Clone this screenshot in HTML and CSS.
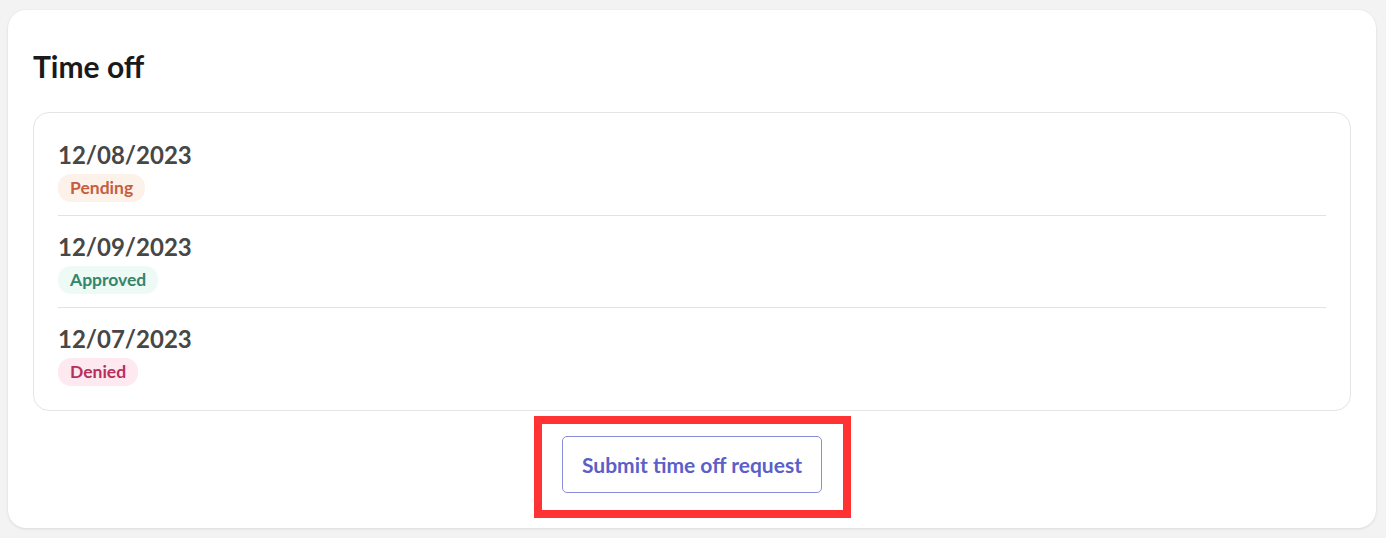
FILE: index.html
```html
<!DOCTYPE html>
<html lang="en">
<head>
<meta charset="utf-8">
<title>Time off</title>
<link rel="stylesheet" href="styles.css">
</head>
<body>
<div class="page">
  <section class="card">
    <h2 class="title">Time off</h2>
    <ul class="list">
      <li class="row">
        <span class="date">12/08/2023</span>
        <span class="badge badge-pending">Pending</span>
      </li>
      <li class="row">
        <span class="date">12/09/2023</span>
        <span class="badge badge-approved">Approved</span>
      </li>
      <li class="row">
        <span class="date">12/07/2023</span>
        <span class="badge badge-denied">Denied</span>
      </li>
    </ul>
    <div class="actions">
      <div class="highlight-wrap">
        <button class="btn" type="button">Submit time off request</button>
        <span class="highlight" aria-hidden="true"></span>
      </div>
    </div>
  </section>
</div>
</body>
</html>
```

FILE: styles.css
```css
* { box-sizing: border-box; }
html, body {
  margin: 0;
  padding: 0;
  background: #f3f3f3;
  font-family: Lato, "Open Sans", "Liberation Sans", sans-serif;
}
.page {
  padding: 10px 10px 10px 8px;
  height: 538px;
}
.card {
  background: #ffffff;
  border-radius: 18px;
  box-shadow: 0 1px 3px rgba(0,0,0,0.10), 0 0 1px rgba(0,0,0,0.06);
  padding: 39px 25px 36px 25px;
  height: 518px;
}
.title {
  margin: 0;
  font-size: 30px;
  line-height: 34px;
  font-weight: 700;
  color: #1a1a1a;
}
.list {
  list-style: none;
  margin: 29px 0 0 0;
  padding: 0 24px;
  border: 1px solid #e4e4e4;
  border-radius: 16px;
  height: 299px;
}
.row {
  display: flex;
  flex-direction: column;
  align-items: flex-start;
  gap: 6px;
  height: 92px;
  padding-top: 18px;
  border-bottom: 1px solid #e2e2e2;
}
.row:first-child { height: 103px; padding-top: 29px; }
.row:last-child { border-bottom: none; }
.date {
  font-size: 24px;
  line-height: 26px;
  font-weight: 700;
  color: #474747;
}
.badge {
  display: inline-block;
  font-size: 17.5px;
  line-height: 28px;
  font-weight: 700;
  padding: 0 12px;
  border-radius: 13px;
}
.badge-pending { background: #fdf2ea; color: #c65d3f; }
.badge-approved { background: #eefaf5; color: #34856a; }
.badge-denied { background: #fde9ef; color: #b7305d; }
.actions {
  display: flex;
  justify-content: center;
  margin-top: 25px;
}
.highlight-wrap {
  position: relative;
}
.btn {
  display: block;
  width: 260px;
  height: 57px;
  background: #ffffff;
  border: 1.5px solid #8a8dd8;
  border-radius: 5px;
  font-family: inherit;
  font-size: 21px;
  font-weight: 700;
  color: #5b5fc7;
  cursor: pointer;
}
.highlight {
  position: absolute;
  left: -28px;
  top: -20px;
  width: 317px;
  height: 102px;
  border: 8px solid #ff3333;
  pointer-events: none;
}
```
